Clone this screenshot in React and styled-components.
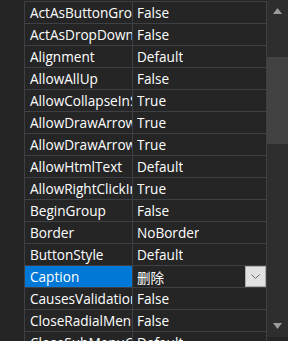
import React from 'react';
import styled, { createGlobalStyle } from 'styled-components';

const ROWS = [
  ['ActAsButtonGroup', 'False'],
  ['ActAsDropDownMenu', 'False'],
  ['Alignment', 'Default'],
  ['AllowAllUp', 'False'],
  ['AllowCollapseInSubmenu', 'True'],
  ['AllowDrawArrow', 'True'],
  ['AllowDrawArrowInMenu', 'True'],
  ['AllowHtmlText', 'Default'],
  ['AllowRightClickInMenu', 'True'],
  ['BeginGroup', 'False'],
  ['Border', 'NoBorder'],
  ['ButtonStyle', 'Default'],
  ['Caption', '删除', true],
  ['CausesValidation', 'False'],
  ['CloseRadialMenuOnItemClick', 'False'],
  ['CloseSubMenuOnClick', 'Default'],
];

export default function App() {
  return (
    <>
      <GlobalStyle />
      <Window>
        <Gutter />
        <Grid>
          {ROWS.map(([name, value, selected]) => (
            <React.Fragment key={name}>
              <NameCell $selected={selected}>{name}</NameCell>
              <ValueCell>
                <ValueText>{value}</ValueText>
                {selected && (
                  <DropButton>
                    <svg width="9" height="5" viewBox="0 0 9 5">
                      <path d="M0.5 0.5 L4.5 4.5 L8.5 0.5" fill="none" stroke="#6a6a6a" strokeWidth="1" />
                    </svg>
                  </DropButton>
                )}
              </ValueCell>
            </React.Fragment>
          ))}
        </Grid>
        <ScrollBar>
          <Arrow>
            <svg width="9" height="6" viewBox="0 0 9 6">
              <path d="M0 6 L4.5 0 L9 6 Z" fill="#9b9b9b" />
            </svg>
          </Arrow>
          <Track>
            <Thumb />
          </Track>
          <Arrow>
            <svg width="9" height="6" viewBox="0 0 9 6">
              <path d="M0 0 L4.5 6 L9 0 Z" fill="#9b9b9b" />
            </svg>
          </Arrow>
        </ScrollBar>
      </Window>
    </>
  );
}

const GlobalStyle = createGlobalStyle`
  html, body {
    margin: 0;
    padding: 0;
    background: #252526;
    overflow: hidden;
  }
`;
const Window = styled.div`
  display: flex;
  width: 288px;
  height: 341px;
  overflow: hidden;
  background: #252526;
  font-family: "Open Sans", "Noto Sans CJK SC", sans-serif;
  font-size: 13.6px;
  color: #ffffff;
`;
const Gutter = styled.div`
  width: 24px;
  flex: none;
`;
const Grid = styled.div`
  align-self: flex-start;
  margin-top: 1px;
  display: grid;
  grid-template-columns: 108px 134px;
  grid-auto-rows: 22px;
  border-left: 1px solid #3f3f46;
  border-top: 1px solid #3f3f46;
  flex: none;
`;
const Cell = styled.div`
  display: flex;
  align-items: center;
  border-right: 1px solid #3f3f46;
  border-bottom: 1px solid #3f3f46;
  white-space: nowrap;
  overflow: hidden;
  background: #252526;
`;
const NameCell = styled(Cell)`
  padding-left: 5px;
  background: ${(p) => (p.$selected ? '#0078d7' : '#252526')};
`;
const ValueCell = styled(Cell)`
  padding-left: 4px;
  justify-content: space-between;
`;
const ValueText = styled.span`
  overflow: hidden;
`;
const DropButton = styled.div`
  width: 19px;
  height: 19px;
  flex: none;
  display: flex;
  align-items: center;
  justify-content: center;
  background: #e1e1e1;
  border: 1px solid #adadad;
`;
const ScrollBar = styled.div`
  flex: 1;
  display: flex;
  flex-direction: column;
  background: #2e2e2e;
  height: 337px;
`;
const Arrow = styled.div`
  height: 22px;
  display: flex;
  align-items: center;
  justify-content: center;
  flex: none;
`;
const Track = styled.div`
  flex: 1;
  padding-top: 35px;
`;
const Thumb = styled.div`
  height: 87px;
  background: #424242;
`;
